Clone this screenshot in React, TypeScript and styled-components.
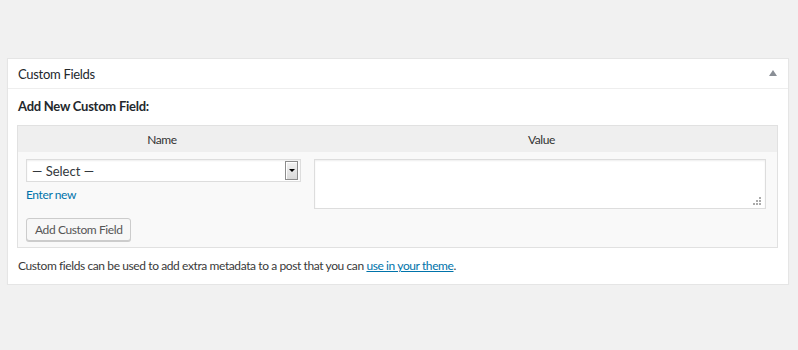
import React from 'react';
import styled, { createGlobalStyle } from 'styled-components';

const GlobalStyle = createGlobalStyle`
  html, body {
    margin: 0;
    padding: 0;
    background: #f1f1f1;
  }
  body {
    font-family: Lato, 'Open Sans', 'Liberation Sans', sans-serif;
    font-size: 12px;
    letter-spacing: -0.4px;
    color: #3a3a3a;
  }
`;

const Page = styled('div')`
  padding: 58px 0 0 7px;
  width: 782px;
`;

const Postbox = styled('div')`
  background: #fff;
  border: 1px solid #e5e5e5;
  box-shadow: 0 1px 1px rgba(0, 0, 0, 0.04);
`;

const BoxHeader = styled('div')`
  display: flex;
  align-items: center;
  justify-content: space-between;
  height: 29px;
  padding: 0 11px 0 10px;
  border-bottom: 1px solid #eee;
  font-size: 13px;
  letter-spacing: -0.3px;
  color: #23282d;
`;

const Toggle = styled('span')`
  width: 0;
  height: 0;
  border-left: 4px solid transparent;
  border-right: 4px solid transparent;
  border-bottom: 6px solid #8a8f96;
  margin-top: -2px;
`;

const Inside = styled('div')`
  padding: 0 9px;
`;

const Label = styled('p')`
  margin: 8px 0 10px 1px;
  line-height: 18px;
  font-size: 13px;
  font-weight: 700;
  letter-spacing: -0.25px;
  color: #23282d;
`;

const FieldTable = styled('table')`
  width: 761px;
  border: 1px solid #e1e1e1;
  border-collapse: collapse;
  background: #f9f9f9;
`;

const HeadCell = styled('th')<{ $wide?: boolean }>`
  height: 26px;
  padding: 0;
  background: #efefef;
  font-weight: 400;
  color: #333;
  text-align: center;
  width: ${({ $wide = false }) => ($wide ? 'auto' : '288px')};
`;

const Cell = styled('td')<{ $first?: boolean }>`
  vertical-align: top;
  padding: 7px ${({ $first = false }) => ($first ? '4px' : '8px')} 6px 8px;
`;

const Select = styled('div')`
  display: flex;
  align-items: center;
  justify-content: space-between;
  box-sizing: border-box;
  width: 275px;
  height: 23px;
  border: 1px solid #ddd;
  background: #fff;
  padding-left: 5px;
  font-size: 13px;
  letter-spacing: 0;
  color: #32373c;
  box-shadow: inset 0 1px 2px rgba(0, 0, 0, 0.07);
`;

const SelectButton = styled('span')`
  display: flex;
  align-items: center;
  justify-content: center;
  width: 11px;
  height: 17px;
  margin-right: 2px;
  border: 1px solid #8c8c8c;
  background: linear-gradient(#f2f2f2, #dadada);
  box-shadow: inset 1px 1px 0 #fff;
`;

const Caret = styled('span')`
  width: 0;
  height: 0;
  border-left: 3px solid transparent;
  border-right: 3px solid transparent;
  border-top: 3px solid #000;
`;

const EnterNew = styled('a')`
  display: block;
  margin: 4px 0 0 0;
  line-height: 18px;
  color: #0073aa;
  text-decoration: none;
`;

const Button = styled('button')`
  display: block;
  box-sizing: border-box;
  margin: 14px 0 0 0;
  height: 23px;
  padding: 0 8px;
  border: 1px solid #ccc;
  border-radius: 3px;
  background: #f7f7f7;
  box-shadow: 0 1px 0 #ccc;
  font-family: inherit;
  font-size: inherit;
  letter-spacing: inherit;
  color: #555;
`;

const TextArea = styled('div')`
  position: relative;
  box-sizing: border-box;
  width: 452px;
  height: 50px;
  border: 1px solid #ddd;
  background: #fff;
  box-shadow: inset 0 1px 2px rgba(0, 0, 0, 0.07);
`;

const Grip = styled('svg')`
  position: absolute;
  right: 4px;
  bottom: 3px;
`;

const Note = styled('p')`
  margin: 9px 0 9px 1px;
  line-height: 18px;
`;

const Link = styled('a')`
  color: #0073aa;
  text-decoration: underline;
`;

export default function App() {
  return (
    <>
      <GlobalStyle />
      <Page>
        <Postbox>
          <BoxHeader>
            <span>Custom Fields</span>
            <Toggle />
          </BoxHeader>
          <Inside>
            <Label>Add New Custom Field:</Label>
            <FieldTable>
              <thead>
                <tr>
                  <HeadCell>Name</HeadCell>
                  <HeadCell $wide>Value</HeadCell>
                </tr>
              </thead>
              <tbody>
                <tr>
                  <Cell $first>
                    <Select>
                      <span>— Select —</span>
                      <SelectButton>
                        <Caret />
                      </SelectButton>
                    </Select>
                    <EnterNew href="#">Enter new</EnterNew>
                    <Button type="button">Add Custom Field</Button>
                  </Cell>
                  <Cell>
                    <TextArea>
                      <Grip width="8" height="8" viewBox="0 0 8 8">
                        <rect x="6" y="0" width="2" height="2" fill="#aaa" />
                        <rect x="3" y="3" width="2" height="2" fill="#aaa" />
                        <rect x="6" y="3" width="2" height="2" fill="#aaa" />
                        <rect x="0" y="6" width="2" height="2" fill="#aaa" />
                        <rect x="3" y="6" width="2" height="2" fill="#aaa" />
                        <rect x="6" y="6" width="2" height="2" fill="#aaa" />
                      </Grip>
                    </TextArea>
                  </Cell>
                </tr>
              </tbody>
            </FieldTable>
            <Note>
              Custom fields can be used to add extra metadata to a post that you can{' '}
              <Link href="#">use in your theme</Link>.
            </Note>
          </Inside>
        </Postbox>
      </Page>
    </>
  );
}
